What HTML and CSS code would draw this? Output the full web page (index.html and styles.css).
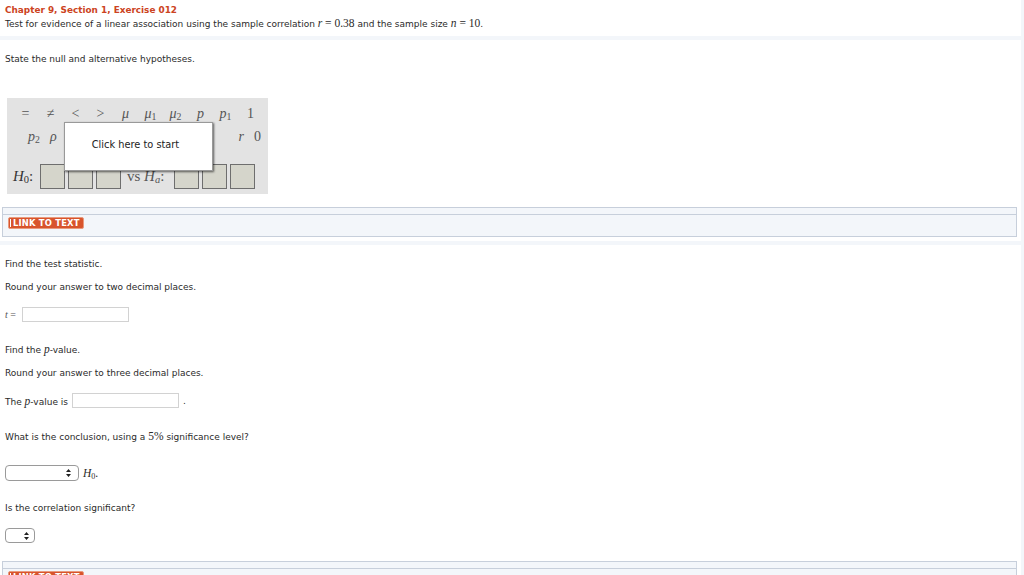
FILE: index.html
```html
<!DOCTYPE html>
<html lang="en">

<head>
    <meta charset="UTF-8">
    <meta name="viewport" content="width=device-width, initial-scale=1.0">
    <title>Chapter 9, Section 1, Exercise 012</title>
    <link rel="stylesheet" href="styles.css">
</head>

<body class="body">
    <div class="page">
        <div class="block head">
            <div class="title">Chapter 9, Section 1, Exercise 012</div>
            <p class="line">Test for evidence of a linear association using the sample correlation <span class="m"><i>r</i> = 0.38</span> and the sample size <span class="m"><i>n</i> = 10</span>.</p>
        </div>

        <div class="block part">
            <p class="q first">State the null and alternative hypotheses.</p>
            <div class="hyp">
                <div class="sym-row">
                    <span>=</span><span>≠</span><span>&lt;</span><span>&gt;</span><span><i>μ</i></span>
                    <span><i>μ</i><sub>1</sub></span><span><i>μ</i><sub>2</sub></span><span><i>p</i></span>
                    <span><i>p</i><sub>1</sub></span><span>1</span>
                </div>
                <div class="sym-row two">
                    <span><i>p</i><sub>2</sub></span><span><i>ρ</i></span>
                    <span class="fill"></span>
                    <span><i>r</i></span><span>0</span>
                </div>
                <div class="h-row">
                    <span class="h-lbl"><i>H</i><sub>0</sub>:</span>
                    <span class="slot"></span><span class="slot"></span><span class="slot"></span>
                    <span class="h-lbl vs">vs <i>H</i><sub><i>a</i></sub>:</span>
                    <span class="slot"></span><span class="slot"></span><span class="slot"></span>
                </div>
                <div class="popup">Click here to start</div>
            </div>
            <div class="link-panel">
                <div class="link-strip"></div>
                <div class="link-body"><span class="link-btn">LINK TO TEXT</span></div>
            </div>
        </div>

        <div class="block part">
            <p class="q first">Find the test statistic.</p>
            <p class="q gap-s">Round your answer to two decimal places.</p>
            <div class="answer gap-m">
                <span class="m small"><i>t</i> =</span>
                <span class="field"></span>
            </div>
            <p class="q gap-l">Find the <span class="m"><i>p</i></span>-value.</p>
            <p class="q gap-s">Round your answer to three decimal places.</p>
            <div class="answer gap-m">
                <span>The <span class="m"><i>p</i></span>-value is</span>
                <span class="field"></span>
                <span>.</span>
            </div>
            <p class="q gap-xl">What is the conclusion, using a <span class="m">5%</span> significance level?</p>
            <div class="answer gap-xl">
                <span class="select wide"><svg width="5" height="8" viewBox="0 0 5 8"><path d="M0 3 L2.5 0 L5 3 Z M0 5 L2.5 8 L5 5 Z" fill="#222"/></svg></span>
                <span class="m"><i>H</i><sub>0</sub>.</span>
            </div>
            <p class="q gap-l">Is the correlation significant?</p>
            <div class="answer gap-m">
                <span class="select"><svg width="5" height="8" viewBox="0 0 5 8"><path d="M0 3 L2.5 0 L5 3 Z M0 5 L2.5 8 L5 5 Z" fill="#222"/></svg></span>
            </div>
            <div class="link-panel low">
                <div class="link-strip"></div>
                <div class="link-body"><span class="link-btn">LINK TO TEXT</span></div>
            </div>
        </div>
    </div>
</body>

</html>
```

FILE: styles.css
```css
html {
    background-color: #f3f6fa;
}

.body {
    margin: 0;
    font-family: 'DejaVu Sans', Verdana, sans-serif;
    font-size: 9px;
    color: #2a2a2a;
}

.page {
    width: 1021px;
    display: flex;
    flex-direction: column;
    gap: 4px;
}

.block {
    background-color: #fff;
    padding: 0 5px;
}

.head {
    padding-top: 4px;
    padding-bottom: 6px;
}

.title {
    color: #cc4322;
    font-weight: bold;
    font-size: 8.9px;
    line-height: 12px;
}

.line,
.q {
    margin: 0;
    line-height: 12px;
}

.line {
    margin-top: 1px;
}

.m {
    font-family: 'Liberation Serif', 'Times New Roman', serif;
    font-size: 11.5px;
}

.m.small {
    font-size: 10px;
    color: #555;
    margin-right: 2px;
}

.m sub,
.h-lbl sub,
.sym-row sub {
    font-size: 70%;
    vertical-align: -2px;
    line-height: 0;
}

.part {
    padding-top: 13px;
    padding-bottom: 4px;
}

.gap-s {
    margin-top: 11px;
}

.gap-m {
    margin-top: 14px;
}

.gap-l {
    margin-top: 21px;
}

.gap-xl {
    margin-top: 22px;
}

/* hypothesis builder */
.hyp {
    position: relative;
    margin: 33px 0 0 2px;
    width: 261px;
    height: 96px;
    background-color: #e3e3e3;
    font-family: 'Liberation Serif', 'Times New Roman', serif;
    font-size: 14px;
    color: #555;
}

.sym-row {
    display: grid;
    grid-template-columns: repeat(10, 25px);
    padding: 6px 0 0 6px;
    height: 20px;
    line-height: 20px;
    text-align: center;
}

.sym-row.two {
    display: flex;
    gap: 10px;
    padding: 3px 7px 0 21px;
}

.sym-row.two .fill {
    flex: 1;
}

.h-row {
    display: grid;
    grid-template-columns: 24px repeat(3, 25px) 47px repeat(3, 25px);
    column-gap: 3px;
    align-items: center;
    padding: 17px 0 0 6px;
    color: #333;
    font-size: 15px;
}

.h-lbl.vs {
    padding-left: 3px;
    color: #555;
}

.slot {
    width: 25px;
    height: 25px;
    box-sizing: border-box;
    background-color: #d5d5cb;
    border: 1px solid #6e6e6e;
}

.popup {
    position: absolute;
    left: 57px;
    top: 24px;
    width: 149px;
    height: 49px;
    box-sizing: border-box;
    padding: 0 6px 5px 0;
    display: flex;
    align-items: center;
    justify-content: center;
    background-color: #fff;
    border: 1px solid #999;
    box-shadow: 1px 1px 2px rgb(0 0 0 / 0.6);
    font-family: 'DejaVu Sans', Verdana, sans-serif;
    font-size: 9.8px;
    color: #222;
}

/* link to text panel */
.link-panel {
    margin: 13px 0 0 -3px;
    width: 1013px;
    border: 1px solid #c7cfdb;
    background-color: #f3f6fa;
}

.link-panel.low {
    margin-top: 18px;
}

.link-strip {
    height: 6px;
    border-bottom: 1px solid #c7cfdb;
}

.link-body {
    height: 21px;
    padding: 2px 0 0 5px;
    box-sizing: border-box;
}

.link-btn {
    position: relative;
    display: inline-block;
    height: 12px;
    line-height: 10px;
    padding: 0 3px 0 4px;
    background-color: #d8542c;
    border: 1px solid #e99a7d;
    border-radius: 2px;
    color: #fff;
    font-weight: bold;
    font-size: 8.4px;
    letter-spacing: 0.2px;
    box-sizing: border-box;
}

.link-btn::before {
    content: "";
    position: absolute;
    left: 1px;
    top: 1px;
    bottom: 1px;
    width: 1px;
    background-color: #fff;
}

/* answers */
.answer {
    display: flex;
    align-items: center;
    gap: 4px;
}

.field {
    width: 107px;
    height: 15px;
    box-sizing: border-box;
    border: 1px solid #d2d2d2;
    background-color: #fff;
}

.select {
    width: 30px;
    height: 15px;
    box-sizing: border-box;
    border: 1px solid #9a9a9a;
    border-radius: 4px;
    display: flex;
    align-items: center;
    justify-content: flex-end;
    padding-right: 5px;
    background-color: #fff;
}

.select.wide {
    width: 74px;
    height: 16px;
    padding-right: 7px;
}
```
